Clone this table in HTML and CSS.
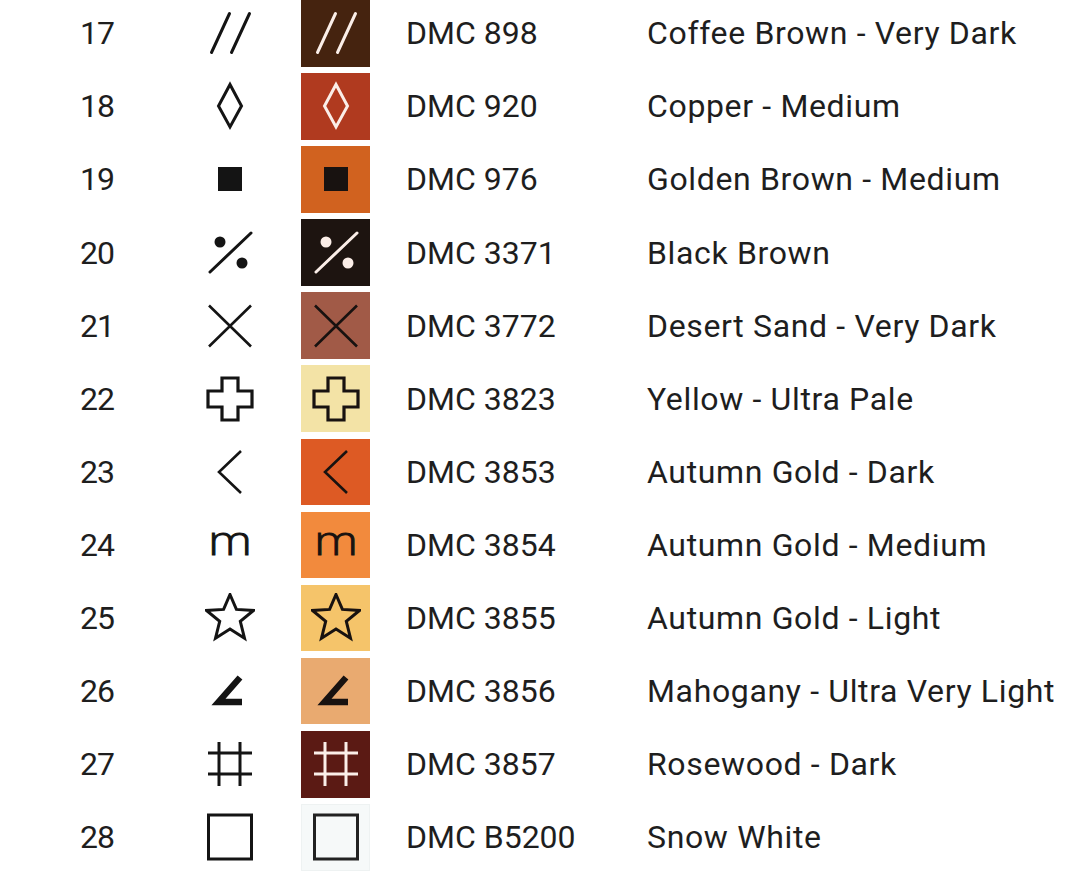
FILE: index.html
```html
<!DOCTYPE html>
<html lang="en">
<head>
<meta charset="utf-8">
<title>Floss key</title>
<link rel="stylesheet" href="styles.css">
</head>
<body>
<svg class="defs" width="0" height="0" aria-hidden="true">
  <defs>
    <symbol id="s17" viewBox="-25 -25 50 50"><path d="M-18.5 19.5 L-0.5 -19.5 M1.5 19.5 L19.5 -19.5" fill="none" stroke="currentColor" stroke-width="3" stroke-linecap="round"/></symbol>
    <symbol id="s18" viewBox="-25 -25 50 50"><path d="M0 -21.5 L11.5 0 L0 21 L-11.5 0 Z" fill="none" stroke="currentColor" stroke-width="3"/></symbol>
    <symbol id="s19" viewBox="-25 -25 50 50"><rect x="-12" y="-12" width="24" height="24" fill="currentColor"/></symbol>
    <symbol id="s20" viewBox="-25 -25 50 50"><path d="M-20 19 L21 -20" fill="none" stroke="currentColor" stroke-width="3" stroke-linecap="round"/><circle cx="-10" cy="-11" r="5.5" fill="currentColor"/><circle cx="12" cy="10" r="5.5" fill="currentColor"/></symbol>
    <symbol id="s21" viewBox="-25 -25 50 50"><path d="M-21 -20.5 L21 20.5 M21 -20.5 L-21 20.5" fill="none" stroke="currentColor" stroke-width="2.6"/></symbol>
    <symbol id="s22" viewBox="-25 -25 50 50"><path d="M-8 -21 H8 V-8 H22 V8 H8 V21 H-8 V8 H-22 V-8 H-8 Z" fill="none" stroke="currentColor" stroke-width="3.2"/></symbol>
    <symbol id="s23" viewBox="-25 -25 50 50"><path d="M11 -21 L-11 0 L11 21" fill="none" stroke="currentColor" stroke-width="2.6"/></symbol>
    <symbol id="s24" viewBox="-25 -25 50 50"><text class="m-glyph" x="0" y="10" text-anchor="middle" textLength="44" lengthAdjust="spacingAndGlyphs" fill="currentColor" stroke="currentColor" stroke-width="0.9">m</text></symbol>
    <symbol id="s25" viewBox="-25 -25 50 50"><path d="M0 -23.5 L6.4 -8.6 L23.5 -7.5 L10.3 3.4 L14.5 20.2 L0 11 L-14.5 20.2 L-10.3 3.4 L-23.5 -7.5 L-6.4 -8.6 Z" fill="none" stroke="currentColor" stroke-width="3" stroke-linejoin="miter"/></symbol>
    <symbol id="s26" viewBox="-25 -25 50 50"><path d="M10 -13.5 L-11.5 11 H12" fill="none" stroke="currentColor" stroke-width="6.4"/></symbol>
    <symbol id="s27" viewBox="-25 -25 50 50"><path d="M-11 -22 V22 M10 -22 V22 M-22 -11 H22 M-22 10 H22" fill="none" stroke="currentColor" stroke-width="3"/></symbol>
    <symbol id="s28" viewBox="-25 -25 50 50"><rect x="-21.5" y="-22" width="43" height="44" fill="none" stroke="currentColor" stroke-width="3"/></symbol>
  </defs>
</svg>

<div class="key">
  <div class="row">
    <div class="num">17</div>
    <div class="sym"><svg class="ico"><use href="#s17"/></svg></div>
    <div class="swatch dark" style="background:#45230f"><svg class="ico"><use href="#s17"/></svg></div>
    <div class="code">DMC 898</div>
    <div class="name">Coffee Brown - Very Dark</div>
  </div>
  <div class="row">
    <div class="num">18</div>
    <div class="sym"><svg class="ico"><use href="#s18"/></svg></div>
    <div class="swatch dark" style="background:#b03a1f"><svg class="ico"><use href="#s18"/></svg></div>
    <div class="code">DMC 920</div>
    <div class="name">Copper - Medium</div>
  </div>
  <div class="row">
    <div class="num">19</div>
    <div class="sym"><svg class="ico"><use href="#s19"/></svg></div>
    <div class="swatch" style="background:#d1621f"><svg class="ico"><use href="#s19"/></svg></div>
    <div class="code">DMC 976</div>
    <div class="name">Golden Brown - Medium</div>
  </div>
  <div class="row">
    <div class="num">20</div>
    <div class="sym"><svg class="ico"><use href="#s20"/></svg></div>
    <div class="swatch dark" style="background:#1d1410"><svg class="ico"><use href="#s20"/></svg></div>
    <div class="code">DMC 3371</div>
    <div class="name">Black Brown</div>
  </div>
  <div class="row">
    <div class="num">21</div>
    <div class="sym"><svg class="ico"><use href="#s21"/></svg></div>
    <div class="swatch" style="background:#a15a47"><svg class="ico"><use href="#s21"/></svg></div>
    <div class="code">DMC 3772</div>
    <div class="name">Desert Sand - Very Dark</div>
  </div>
  <div class="row">
    <div class="num">22</div>
    <div class="sym"><svg class="ico"><use href="#s22"/></svg></div>
    <div class="swatch" style="background:#f3e3a6"><svg class="ico"><use href="#s22"/></svg></div>
    <div class="code">DMC 3823</div>
    <div class="name">Yellow - Ultra Pale</div>
  </div>
  <div class="row">
    <div class="num">23</div>
    <div class="sym"><svg class="ico"><use href="#s23"/></svg></div>
    <div class="swatch" style="background:#dd5a24"><svg class="ico"><use href="#s23"/></svg></div>
    <div class="code">DMC 3853</div>
    <div class="name">Autumn Gold - Dark</div>
  </div>
  <div class="row">
    <div class="num">24</div>
    <div class="sym"><svg class="ico"><use href="#s24"/></svg></div>
    <div class="swatch" style="background:#f28a3d"><svg class="ico"><use href="#s24"/></svg></div>
    <div class="code">DMC 3854</div>
    <div class="name">Autumn Gold - Medium</div>
  </div>
  <div class="row">
    <div class="num">25</div>
    <div class="sym"><svg class="ico"><use href="#s25"/></svg></div>
    <div class="swatch" style="background:#f5c46a"><svg class="ico"><use href="#s25"/></svg></div>
    <div class="code">DMC 3855</div>
    <div class="name">Autumn Gold - Light</div>
  </div>
  <div class="row">
    <div class="num">26</div>
    <div class="sym"><svg class="ico"><use href="#s26"/></svg></div>
    <div class="swatch" style="background:#e9aa70"><svg class="ico"><use href="#s26"/></svg></div>
    <div class="code">DMC 3856</div>
    <div class="name">Mahogany - Ultra Very Light</div>
  </div>
  <div class="row">
    <div class="num">27</div>
    <div class="sym"><svg class="ico"><use href="#s27"/></svg></div>
    <div class="swatch dark" style="background:#5b1a14"><svg class="ico"><use href="#s27"/></svg></div>
    <div class="code">DMC 3857</div>
    <div class="name">Rosewood - Dark</div>
  </div>
  <div class="row">
    <div class="num">28</div>
    <div class="sym"><svg class="ico"><use href="#s28"/></svg></div>
    <div class="swatch light" style="background:#f6f9f9"><svg class="ico"><use href="#s28"/></svg></div>
    <div class="code">DMC B5200</div>
    <div class="name">Snow White</div>
  </div>
</div>
</body>
</html>
```

FILE: styles.css
```css
html, body {
  margin: 0;
  padding: 0;
  background: #ffffff;
}

body {
  font-family: Roboto, "Noto Sans", sans-serif;
  font-size: 32px;
  color: #1e1e1e;
}

.defs {
  position: absolute;
  width: 0;
  height: 0;
  overflow: hidden;
}

.key {
  display: flex;
  flex-direction: column;
  gap: 6.5px;
  padding-left: 80px;
}

.row {
  display: flex;
  align-items: center;
  height: 66.6px;
}

.num {
  width: 101px;
  flex: none;
  letter-spacing: -1px;
}

.sym {
  width: 98px;
  flex: none;
  display: flex;
  justify-content: center;
  align-items: center;
  color: #141414;
}

.swatch {
  width: 69px;
  height: 100%;
  flex: none;
  margin-left: 22px;
  display: flex;
  justify-content: center;
  align-items: center;
  color: #181210;
}

.swatch.dark {
  color: #fbeee8;
}

.swatch.light {
  box-shadow: inset 0 0 0 1px #eef2f2;
  color: #222;
}

.ico {
  width: 50px;
  height: 50px;
  display: block;
}

.m-glyph {
  font-family: "Open Sans", "Noto Sans", sans-serif;
  font-size: 41px;
  font-weight: 300;
}

.code {
  width: 241px;
  flex: none;
  margin-left: 36px;
  white-space: nowrap;
}

.name {
  white-space: nowrap;
  letter-spacing: 0.65px;
}
```
